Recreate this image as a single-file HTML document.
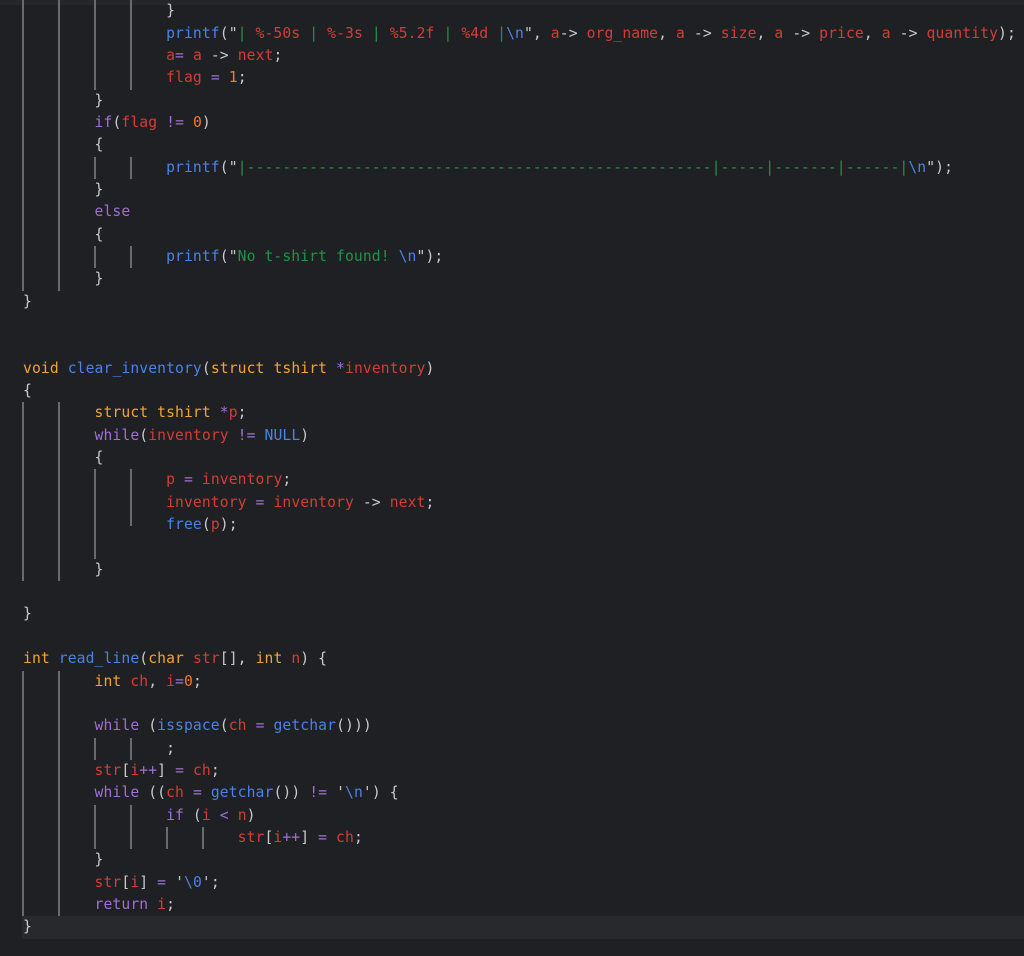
<!DOCTYPE html>
<html><head><meta charset="utf-8"><style>
html,body{margin:0;padding:0;background:#1f2023;width:1024px;height:956px;overflow:hidden}
#c{position:absolute;left:0;top:0.2px;width:1024px}
.l{position:relative;height:22.35px;line-height:22.35px;font-family:"DejaVu Sans Mono","Liberation Mono",monospace;font-size:14.7px;letter-spacing:0.1px;color:#c9c9c9;white-space:pre}
.l .x{position:absolute;left:23px;top:0}
.g{position:absolute;top:0;width:1.5px;height:22.35px;background:#6a6a6a}
.f{color:#4a82e8}.v{color:#d43d35}.s{color:#23914a}.k{color:#9f6fd6}.t{color:#f0a530}.n{color:#f27a2a}.e{color:#4a82e8}
.hl{background:#28292d;margin-left:22px}
.hl .x{left:1px}
#top{position:absolute;left:0;top:0;width:1024px;height:5px;background:#252629}
</style></head><body>
<div id="top"></div>
<div id="c">
<div class="l"><i class="g" style="left:22px"></i><i class="g" style="left:58px"></i><i class="g" style="left:94px"></i><i class="g" style="left:130px"></i><span class="x">                }</span></div>
<div class="l"><i class="g" style="left:22px"></i><i class="g" style="left:58px"></i><i class="g" style="left:94px"></i><i class="g" style="left:130px"></i><span class="x">                <span class="f">printf</span>("<span class="s">|</span> <span class="v">%-50s</span> <span class="s">|</span> <span class="v">%-3s</span> <span class="s">|</span> <span class="v">%5.2f</span> <span class="s">|</span> <span class="v">%4d</span> <span class="s">|</span><span class="e">\n</span>", <span class="v">a</span>-&gt; <span class="v">org_name</span>, <span class="v">a</span> -&gt; <span class="v">size</span>, <span class="v">a</span> -&gt; <span class="v">price</span>, <span class="v">a</span> -&gt; <span class="v">quantity</span>);</span></div>
<div class="l"><i class="g" style="left:22px"></i><i class="g" style="left:58px"></i><i class="g" style="left:94px"></i><i class="g" style="left:130px"></i><span class="x">                <span class="v">a</span><span class="k">=</span> <span class="v">a</span> -&gt; <span class="v">next</span>;</span></div>
<div class="l"><i class="g" style="left:22px"></i><i class="g" style="left:58px"></i><i class="g" style="left:94px"></i><i class="g" style="left:130px"></i><span class="x">                <span class="v">flag</span> <span class="k">=</span> <span class="n">1</span>;</span></div>
<div class="l"><i class="g" style="left:22px"></i><i class="g" style="left:58px"></i><span class="x">        }</span></div>
<div class="l"><i class="g" style="left:22px"></i><i class="g" style="left:58px"></i><span class="x">        <span class="k">if</span>(<span class="v">flag</span> <span class="k">!=</span> <span class="n">0</span>)</span></div>
<div class="l"><i class="g" style="left:22px"></i><i class="g" style="left:58px"></i><span class="x">        {</span></div>
<div class="l"><i class="g" style="left:22px"></i><i class="g" style="left:58px"></i><i class="g" style="left:94px"></i><i class="g" style="left:130px"></i><span class="x">                <span class="f">printf</span>("<span class="s">|----------------------------------------------------|-----|-------|------|</span><span class="e">\n</span>");</span></div>
<div class="l"><i class="g" style="left:22px"></i><i class="g" style="left:58px"></i><span class="x">        }</span></div>
<div class="l"><i class="g" style="left:22px"></i><i class="g" style="left:58px"></i><span class="x">        <span class="k">else</span></span></div>
<div class="l"><i class="g" style="left:22px"></i><i class="g" style="left:58px"></i><span class="x">        {</span></div>
<div class="l"><i class="g" style="left:22px"></i><i class="g" style="left:58px"></i><i class="g" style="left:94px"></i><i class="g" style="left:130px"></i><span class="x">                <span class="f">printf</span>("<span class="s">No t-shirt found! </span><span class="e">\n</span>");</span></div>
<div class="l"><i class="g" style="left:22px"></i><i class="g" style="left:58px"></i><span class="x">        }</span></div>
<div class="l"><span class="x">}</span></div>
<div class="l"></div>
<div class="l"></div>
<div class="l"><span class="x"><span class="t">void</span> <span class="f">clear_inventory</span>(<span class="t">struct</span> <span class="t">tshirt</span> <span class="k">*</span><span class="v">inventory</span>)</span></div>
<div class="l"><span class="x">{</span></div>
<div class="l"><i class="g" style="left:22px"></i><i class="g" style="left:58px"></i><span class="x">        <span class="t">struct</span> <span class="t">tshirt</span> <span class="k">*</span><span class="v">p</span>;</span></div>
<div class="l"><i class="g" style="left:22px"></i><i class="g" style="left:58px"></i><span class="x">        <span class="k">while</span>(<span class="v">inventory</span> <span class="k">!=</span> <span class="f">NULL</span>)</span></div>
<div class="l"><i class="g" style="left:22px"></i><i class="g" style="left:58px"></i><span class="x">        {</span></div>
<div class="l"><i class="g" style="left:22px"></i><i class="g" style="left:58px"></i><i class="g" style="left:94px"></i><i class="g" style="left:130px"></i><span class="x">                <span class="v">p</span> <span class="k">=</span> <span class="v">inventory</span>;</span></div>
<div class="l"><i class="g" style="left:22px"></i><i class="g" style="left:58px"></i><i class="g" style="left:94px"></i><i class="g" style="left:130px"></i><span class="x">                <span class="v">inventory</span> <span class="k">=</span> <span class="v">inventory</span> -&gt; <span class="v">next</span>;</span></div>
<div class="l"><i class="g" style="left:22px"></i><i class="g" style="left:58px"></i><i class="g" style="left:94px"></i><i class="g" style="left:130px;height:12px"></i><span class="x">                <span class="f">free</span>(<span class="v">p</span>);</span></div>
<div class="l"><i class="g" style="left:22px"></i><i class="g" style="left:58px"></i><i class="g" style="left:94px"></i></div>
<div class="l"><i class="g" style="left:22px"></i><i class="g" style="left:58px"></i><span class="x">        }</span></div>
<div class="l"></div>
<div class="l"><span class="x">}</span></div>
<div class="l"></div>
<div class="l"><span class="x"><span class="t">int</span> <span class="f">read_line</span>(<span class="t">char</span> <span class="v">str</span>[], <span class="t">int</span> <span class="v">n</span>) {</span></div>
<div class="l"><i class="g" style="left:22px"></i><i class="g" style="left:58px"></i><span class="x">        <span class="t">int</span> <span class="v">ch</span>, <span class="v">i</span><span class="k">=</span><span class="n">0</span>;</span></div>
<div class="l"><i class="g" style="left:22px"></i><i class="g" style="left:58px"></i></div>
<div class="l"><i class="g" style="left:22px"></i><i class="g" style="left:58px"></i><span class="x">        <span class="k">while</span> (<span class="f">isspace</span>(<span class="v">ch</span> <span class="k">=</span> <span class="f">getchar</span>()))</span></div>
<div class="l"><i class="g" style="left:22px"></i><i class="g" style="left:58px"></i><i class="g" style="left:94px"></i><i class="g" style="left:130px"></i><span class="x">                ;</span></div>
<div class="l"><i class="g" style="left:22px"></i><i class="g" style="left:58px"></i><span class="x">        <span class="v">str</span>[<span class="v">i</span><span class="k">++</span>] <span class="k">=</span> <span class="v">ch</span>;</span></div>
<div class="l"><i class="g" style="left:22px"></i><i class="g" style="left:58px"></i><span class="x">        <span class="k">while</span> ((<span class="v">ch</span> <span class="k">=</span> <span class="f">getchar</span>()) <span class="k">!=</span> '<span class="e">\n</span>') {</span></div>
<div class="l"><i class="g" style="left:22px"></i><i class="g" style="left:58px"></i><i class="g" style="left:94px"></i><i class="g" style="left:130px"></i><span class="x">                <span class="k">if</span> (<span class="v">i</span> <span class="k">&lt;</span> <span class="v">n</span>)</span></div>
<div class="l"><i class="g" style="left:22px"></i><i class="g" style="left:58px"></i><i class="g" style="left:94px"></i><i class="g" style="left:130px"></i><i class="g" style="left:166px"></i><i class="g" style="left:202px"></i><span class="x">                        <span class="v">str</span>[<span class="v">i</span><span class="k">++</span>] <span class="k">=</span> <span class="v">ch</span>;</span></div>
<div class="l"><i class="g" style="left:22px"></i><i class="g" style="left:58px"></i><span class="x">        }</span></div>
<div class="l"><i class="g" style="left:22px"></i><i class="g" style="left:58px"></i><span class="x">        <span class="v">str</span>[<span class="v">i</span>] <span class="k">=</span> '<span class="e">\0</span>';</span></div>
<div class="l"><i class="g" style="left:22px"></i><i class="g" style="left:58px"></i><span class="x">        <span class="k">return</span> <span class="v">i</span>;</span></div>
<div class="l hl"><span class="x">}</span></div>
</div>
</body></html>
